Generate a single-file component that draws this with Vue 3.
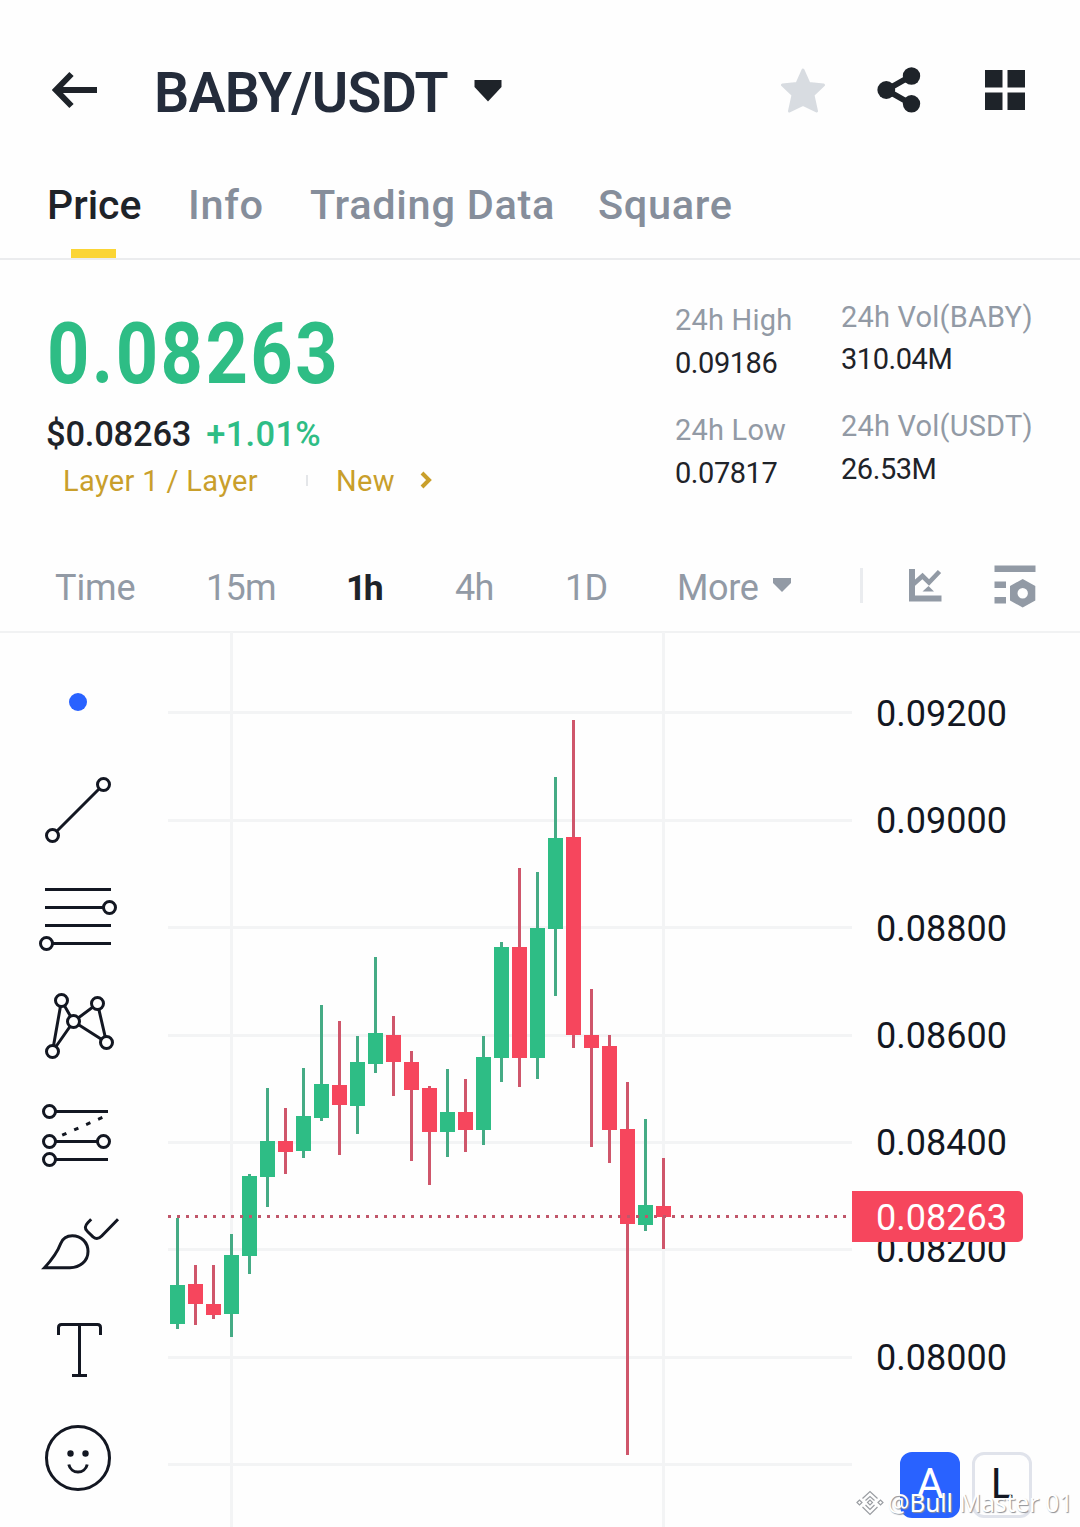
<template>
  <div class="page">
    <header class="header">
      <svg class="back" viewBox="0 0 46 38" width="46" height="38">
        <path d="M45 19H4M19.500 3L4 19L19.500 35" fill="none" stroke="#1e2329" stroke-width="6" />
      </svg>
      <h1 class="pair">BABY/USDT</h1>
      <svg class="pair-caret" viewBox="0 0 28 22" width="28" height="22">
        <path d="M0.500 0H27.500V7L14 21.500L0.500 7Z" fill="#1e2329" />
      </svg>
      <div class="header-actions">
        <svg viewBox="0 0 46 46" width="46" height="46">
          <path
            d="M23 3L29 16.500L43.500 18L33 28L36.500 44L23 37.500L9.500 44L13 28L2.500 18L17 16.500Z"
            fill="#d8dce1"
            stroke="#d8dce1"
            stroke-width="3"
            stroke-linejoin="round"
          />
        </svg>
        <svg viewBox="0 0 44 46" width="44" height="46">
          <path d="M34 9L9.500 23L34 37" fill="none" stroke="#1e2329" stroke-width="6" />
          <circle cx="34.500" cy="9" r="8.700" fill="#1e2329" />
          <circle cx="9.300" cy="23" r="8.900" fill="#1e2329" />
          <circle cx="34.500" cy="36.800" r="8.700" fill="#1e2329" />
        </svg>
        <svg viewBox="0 0 40 40" width="40" height="40">
          <path d="M0 0H17.500V17.500H0ZM22.500 0H40V17.500H22.500ZM0 22.500H17.500V40H0ZM22.500 22.500H40V40H22.500Z" fill="#1e2329" />
        </svg>
      </div>
    </header>

    <nav class="tabs">
      <a
        v-for="tab in tabs"
        :key="tab"
        class="tab"
        :class="{ active: tab === activeTab }"
        @click="activeTab = tab"
      >{{ tab }}</a>
    </nav>

    <section class="ticker">
      <div class="quote">
        <div class="last">0.08263</div>
        <div class="sub">
          <span class="fiat">$0.08263</span>
          <span class="change">+1.01%</span>
        </div>
        <div class="tags">
          <span class="layer">Layer 1 / Layer</span>
          <i class="tag-divider"></i>
          <span class="new">New</span>
          <svg viewBox="0 0 12 18" width="12" height="18">
            <path d="M2 2L9 9L2 16" fill="none" stroke="#c99f2b" stroke-width="4" />
          </svg>
        </div>
      </div>
      <dl class="stats left">
        <dt>24h High</dt>
        <dd>0.09186</dd>
        <dt>24h Low</dt>
        <dd>0.07817</dd>
      </dl>
      <dl class="stats right">
        <dt>24h Vol(BABY)</dt>
        <dd>310.04M</dd>
        <dt>24h Vol(USDT)</dt>
        <dd>26.53M</dd>
      </dl>
    </section>

    <div class="intervals">
      <span
        v-for="item in intervals"
        :key="item"
        class="interval"
        :class="{ active: item === activeInterval }"
        @click="activeInterval = item"
      >{{ item }}</span>
      <span class="interval more">
        More
        <svg viewBox="0 0 18 15" width="18" height="15">
          <path d="M0 0H18V5L9 14L0 5Z" fill="#929aa5" />
        </svg>
      </span>
      <i class="interval-divider"></i>
      <svg class="indicator" viewBox="0 0 33 33" width="33" height="33">
        <path d="M3 0V29.500H32.500" fill="none" stroke="#929aa5" stroke-width="6" />
        <path d="M4 15.500L13.500 7L20 13.500L30.500 2.500" fill="none" stroke="#929aa5" stroke-width="4.600" />
        <path d="M13.500 22.500L19.500 17L25 22.500Z" fill="#929aa5" />
      </svg>
      <svg class="settings" viewBox="0 0 42 43" width="42" height="43">
        <path d="M0.500 0.500H41.500V7H0.500ZM0.500 16.500H12V23H0.500ZM0.500 32H12V38.500H0.500Z" fill="#929aa5" />
        <path
          fill-rule="evenodd"
          d="M28.700 14L41.300 21V35.500L28.700 42.500L16 35.500V21ZM28.700 23A5.200 5.200 0 1 0 28.700 33.400A5.200 5.200 0 1 0 28.700 23Z"
          fill="#929aa5"
        />
      </svg>
    </div>

    <section class="chart">
      <div class="tools">
        <svg viewBox="0 0 108 108">
          <circle class="dot" cx="54" cy="54" r="9" />
        </svg>
        <svg viewBox="0 0 108 108">
          <path d="M33 75L75 33" />
          <circle cx="79.500" cy="28.500" r="6" />
          <circle cx="28.500" cy="79.500" r="6" />
        </svg>
        <svg viewBox="0 0 108 108">
          <path d="M21 25.500H87M21 43.500H79M21 61.500H87M29 79.500H87" />
          <circle cx="85.500" cy="43.500" r="6" />
          <circle cx="22.500" cy="79.500" r="6" />
        </svg>
        <svg viewBox="0 0 108 108">
          <path d="M28.500 79.500L37.500 28.500L49.500 49.500ZM49.500 49.500L73.500 31.500L82.500 70.500Z" />
          <circle cx="37.500" cy="28.500" r="6" />
          <circle cx="73.500" cy="31.500" r="6" />
          <circle cx="49.500" cy="49.500" r="6" />
          <circle cx="28.500" cy="79.500" r="6" />
          <circle cx="82.500" cy="70.500" r="6" />
        </svg>
        <svg viewBox="0 0 108 108">
          <path d="M32 31.500H84M32 61.500H73M32 79.500H84" />
          <path d="M38.200 55.200L82 35.800" stroke-dasharray="4.600 8.500" />
          <circle cx="25.500" cy="31.500" r="6" />
          <circle cx="25.500" cy="61.500" r="6" />
          <circle cx="79.500" cy="61.500" r="6" />
          <circle cx="25.500" cy="79.500" r="6" />
        </svg>
        <svg viewBox="0 0 108 108">
          <path d="M20.500 79.700H46C56 79.700 64 73 64 63.500C64 54 57 47.800 48.300 47.800C42.500 47.800 38.500 51 36.700 55.500C33.500 64 29.500 70 20.500 79.700Z" />
          <path d="M67.200 31.300L64 34.500Q59 39.500 63.500 43.500L69 48.800Q73.300 52.500 77.700 48L94 31.300" />
        </svg>
        <svg viewBox="0 0 108 108">
          <path d="M34.500 39V31.500Q34.500 28.500 37.500 28.500H73.500Q76.500 28.500 76.500 31.500V39M55.500 28.500V79.500M48 79.500H63" />
        </svg>
        <svg viewBox="0 0 108 108">
          <circle cx="54" cy="54" r="31.500" />
          <circle class="eye" cx="46.500" cy="49.500" r="3.200" />
          <circle class="eye" cx="61.500" cy="49.500" r="3.200" />
          <path d="M44.800 60.500C47 70.500 61 70.500 63.200 60.500" />
        </svg>
      </div>

      <svg class="plot" viewBox="168 632 684 895" width="684" height="895">
        <g class="grid">
          <line v-for="y in gridRows" :key="'r' + y" x1="168" x2="852" :y1="y" :y2="y" />
          <line v-for="x in [231.5, 663.5]" :key="'c' + x" :x1="x" :x2="x" y1="632" y2="1527" />
        </g>
        <g v-for="(c, i) in candles" :key="i" :class="c[0]">
          <rect class="wick" :x="176 + i * 18" :y="c[1]" width="3" :height="c[4] - c[1]" />
          <rect class="body" :x="170 + i * 18" :y="c[2]" width="15" :height="c[3] - c[2]" />
        </g>
        <line class="last-line" x1="168" x2="848" y1="1216.500" y2="1216.500" />
      </svg>

      <div class="axis">
        <span v-for="price in prices" :key="price" class="axis-label">{{ price }}</span>
        <span class="price-tag">0.08263</span>
        <div class="scale-modes">
          <button class="mode on">A</button>
          <button class="mode">L</button>
        </div>
      </div>
    </section>

    <div class="watermark">
      <svg viewBox="0 0 28 26" width="28" height="26">
        <g fill="none" stroke="#9a9da2" stroke-width="1.200">
          <path d="M6.500 8.500L14 1.500L21.500 8.500M9.500 10.500L14 6.500L18.500 10.500" />
          <path d="M6.500 17L14 24.500L21.500 17M9.500 15L14 19.500L18.500 15" />
          <path d="M1 12.500L3.500 10L6 12.500L3.500 15ZM11.500 12.500L14 10L16.500 12.500L14 15ZM22 12.500L24.500 10L27 12.500L24.500 15Z" />
        </g>
      </svg>
      <span>@Bull Master 01</span>
    </div>
  </div>
</template>

<script setup>
import { ref } from "vue";

const tabs = ["Price", "Info", "Trading Data", "Square"];
const activeTab = ref("Price");

const intervals = ["Time", "15m", "1h", "4h", "1D"];
const activeInterval = ref("1h");

const prices = ["0.09200", "0.09000", "0.08800", "0.08600", "0.08400", "0.08200", "0.08000"];
const gridRows = [712.5, 820.5, 927.5, 1035.5, 1142.5, 1249.5, 1357.5, 1464.5];

// direction, high, body top, body bottom, low
const candles = [
  ["up", 1218, 1285, 1324, 1329],
  ["down", 1265, 1284, 1304, 1325],
  ["down", 1265, 1304, 1315, 1319],
  ["up", 1234, 1255, 1314, 1337],
  ["up", 1174, 1176, 1256, 1274],
  ["up", 1088, 1141, 1177, 1207],
  ["down", 1108, 1141, 1152, 1174],
  ["up", 1068, 1116, 1151, 1158],
  ["up", 1005, 1084, 1118, 1121],
  ["down", 1021, 1085, 1105, 1155],
  ["up", 1036, 1062, 1106, 1134],
  ["up", 957, 1033, 1064, 1073],
  ["down", 1016, 1035, 1062, 1096],
  ["down", 1051, 1062, 1090, 1161],
  ["down", 1086, 1088, 1132, 1185],
  ["up", 1069, 1112, 1132, 1157],
  ["down", 1079, 1112, 1130, 1152],
  ["up", 1036, 1057, 1130, 1145],
  ["up", 942, 947, 1058, 1082],
  ["down", 868, 947, 1058, 1087],
  ["up", 872, 928, 1058, 1079],
  ["up", 777, 838, 929, 996],
  ["down", 720, 837, 1035, 1048],
  ["down", 989, 1035, 1048, 1147],
  ["down", 1035, 1046, 1130, 1163],
  ["down", 1082, 1129, 1224, 1455],
  ["up", 1119, 1205, 1225, 1231],
  ["down", 1158, 1206, 1217, 1249],
];
</script>

<style>
body {
  margin: 0;
  background: #fefefe;
}
</style>

<style scoped>
.page {
  position: relative;
  width: 1080px;
  height: 1527px;
  overflow: hidden;
  background: #fefefe;
  color: #1e2329;
  font-family: Roboto, "Noto Sans", sans-serif;
  white-space: nowrap;
}

svg {
  display: block;
  flex: none;
}

.header {
  display: flex;
  align-items: center;
  height: 180px;
  padding: 0 55px 0 53px;
  box-sizing: border-box;
}

.back {
  margin-left: -1px;
}

.pair {
  width: 296px;
  margin: 7px 0 0 56px;
  font-size: 55.500px;
  font-weight: 600;
  line-height: 64px;
  letter-spacing: -0.700px;
  color: #242c3b;
}

.pair-caret {
  margin: 2px 0 0 24px;
}

.header-actions {
  display: flex;
  align-items: center;
  gap: 51px;
  margin-left: auto;
}

.header-actions svg:last-child {
  margin-left: 13px;
}

.tabs {
  display: grid;
  grid-template-columns: 141px 122px 288px 160px;
  height: 78px;
  padding-left: 47px;
  border-bottom: 2px solid #ebecee;
}

.tab {
  position: relative;
  justify-self: start;
  font-size: 41.500px;
  font-weight: 500;
  line-height: 50px;
  letter-spacing: 0.700px;
  color: #868e9b;
}

.tab.active {
  font-size: 41px;
  letter-spacing: 0;
  color: #1e2329;
}

.tab.active::after {
  content: "";
  position: absolute;
  left: 24px;
  bottom: 0;
  width: 45px;
  height: 9px;
  background: #fbd535;
}

.ticker {
  display: grid;
  grid-template-columns: 628px 166px 1fr;
  height: 282px;
  padding-left: 47px;
}

.last {
  margin-top: 44px;
  font-size: 85px;
  font-weight: 700;
  line-height: 100px;
  letter-spacing: 2.800px;
  color: #2ebd85;
  transform: scaleX(0.87);
  transform-origin: left;
}

.sub {
  display: flex;
  gap: 15px;
  margin: 8px 0 0 -1px;
  font-size: 34.500px;
  font-weight: 500;
  line-height: 44px;
  letter-spacing: -0.200px;
}

.change {
  letter-spacing: 0.300px;
  color: #2ebd85;
}

.tags {
  display: flex;
  align-items: center;
  height: 48px;
  padding-left: 16px;
  font-size: 29px;
  letter-spacing: 0.350px;
  color: #c99f2b;
}

.layer {
  width: 243px;
  margin-top: 2px;
}

.tag-divider {
  width: 2px;
  height: 11px;
  background: #e4e6e9;
}

.new {
  width: 84px;
  margin: 2px 0 0 28px;
}

.stats {
  display: grid;
  grid-template-rows: 43px 67px 43px 43px;
  align-content: start;
  margin: 0;
  font-size: 29px;
  line-height: 36px;
}

.stats.left {
  padding-top: 42px;
}

.stats.right {
  grid-template-rows: 42px 67px 43px 43px;
  padding-top: 39px;
}

.stats dt {
  letter-spacing: 0.200px;
  color: #929aa5;
}

.stats dd {
  margin: 0;
  letter-spacing: -0.450px;
}

.intervals {
  display: grid;
  grid-template-columns: 151px 141px 108px 110px 112px 184px 48px 85px 42px;
  align-items: center;
  height: 89px;
  padding-left: 55px;
  border-bottom: 2px solid #f1f2f3;
  font-size: 36px;
  letter-spacing: -0.700px;
  color: #929aa5;
}

.interval {
  margin-top: 3px;
}

.interval:first-child {
  letter-spacing: -0.100px;
}

.interval.active {
  margin-left: -1px;
  font-size: 35.500px;
  font-weight: 700;
  letter-spacing: -2.500px;
  color: #1e2329;
}

.more {
  display: flex;
  align-items: center;
  gap: 15px;
  letter-spacing: -0.400px;
}

.more svg {
  margin-top: -5px;
}

.interval-divider {
  width: 3px;
  height: 35px;
  margin: -2px 0 0 -1px;
  background: #eaecef;
}

.indicator {
  margin-top: -2px;
}

.chart {
  display: grid;
  grid-template-columns: 168px 684px 228px;
  height: 895px;
}

.tools {
  display: flex;
  flex-direction: column;
  padding: 15px 0 0 24px;
}

.tools svg {
  width: 108px;
  height: 108px;
  fill: none;
  stroke: #131722;
  stroke-width: 3;
}

.tools circle {
  fill: #fefefe;
}

.tools .dot {
  fill: #2962ff;
  stroke: none;
}

.tools .eye {
  fill: #131722;
  stroke: none;
}

.plot {
  margin-top: -1px;
}

.grid line {
  stroke: #f3f4f5;
  stroke-width: 3;
}

.up .body {
  fill: #2ebd85;
}

.up .wick {
  fill: #45ab85;
}

.down .body {
  fill: #f6465d;
}

.down .wick {
  fill: #cf566b;
}

.last-line {
  stroke: #c0566a;
  stroke-width: 3;
  stroke-dasharray: 3 6;
}

.axis {
  position: relative;
  display: flex;
  flex-direction: column;
  padding-top: 28px;
}

.axis-label {
  height: 107.300px;
  padding-left: 24px;
  font-size: 36px;
  line-height: 107.300px;
  color: #131722;
}

/* sits over the labels at the last traded price */
.price-tag {
  position: absolute;
  left: 0;
  top: 558px;
  width: 171px;
  height: 51px;
  padding-left: 24px;
  box-sizing: border-box;
  border-radius: 0 5px 5px 0;
  background: #f6465d;
  color: #fff;
  font-size: 36px;
  line-height: 54px;
}

.scale-modes {
  display: flex;
  gap: 12px;
  margin: 40px 0 0 48px;
}

.mode {
  width: 60px;
  height: 66px;
  padding: 0 0 2px;
  border: 3px solid #e0e3eb;
  border-radius: 12px;
  background: #fefefe;
  color: #131722;
  font-family: inherit;
  font-size: 42px;
  line-height: 58px;
}

.mode.on {
  border-color: #2962ff;
  background: #2962ff;
  color: #fff;
}

.watermark {
  position: absolute;
  right: 7px;
  bottom: 7px;
  display: flex;
  align-items: center;
  gap: 4px;
  color: #fff;
  font-family: "Noto Sans", sans-serif;
  font-size: 24.500px;
  line-height: 34px;
  letter-spacing: -0.100px;
  text-shadow: 1px 1px 1px #8d9096;
}
</style>
